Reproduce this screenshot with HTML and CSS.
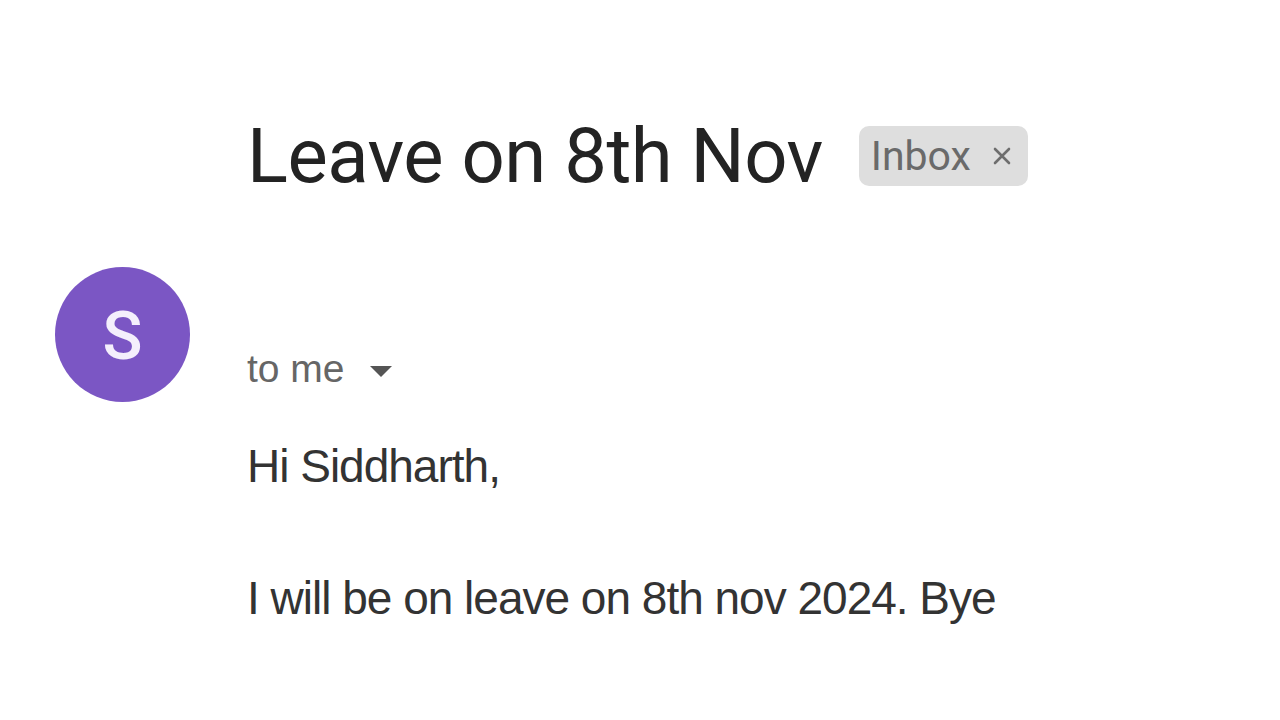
FILE: index.html
```html
<!DOCTYPE html>
<html lang="en">
<head>
<meta charset="utf-8">
<title>Leave on 8th Nov</title>
<link rel="stylesheet" href="styles.css">
</head>
<body>
<main class="mail">
  <header class="subject-row">
    <h1 class="subject">Leave on 8th Nov</h1>
    <span class="chip">
      <span class="chip-label">Inbox</span>
      <svg class="chip-x" viewBox="0 0 20 20" width="20" height="20" aria-hidden="true">
        <path d="M3 3 L17 17 M17 3 L3 17" stroke="#6e6e6e" stroke-width="2.6" stroke-linecap="round" fill="none"/>
      </svg>
    </span>
  </header>
  <section class="message">
    <div class="avatar"><span class="avatar-letter">S</span></div>
    <div class="content">
      <div class="meta">
        <span class="recipient">to me</span>
        <svg class="caret" viewBox="0 0 24 12" width="24" height="12" aria-hidden="true">
          <path d="M1 1 L23 1 L12 12 Z" fill="#555"/>
        </svg>
      </div>
      <p class="greeting">Hi Siddharth,</p>
      <p class="body-text">I will be on leave on 8th nov 2024. Bye</p>
    </div>
  </section>
</main>
</body>
</html>
```

FILE: styles.css
```css
html, body {
  margin: 0;
  padding: 0;
  background: #ffffff;
}

.mail {
  width: 1280px;
  height: 720px;
  overflow: hidden;
}

.subject-row {
  display: flex;
  align-items: center;
  gap: 36px;
  padding: 118px 0 0 247px;
}

.subject {
  margin: 0;
  font-family: Roboto, "Liberation Sans", sans-serif;
  font-weight: 400;
  font-size: 76px;
  line-height: 76px;
  color: #232323;
  letter-spacing: -0.5px;
}

.chip {
  display: flex;
  align-items: center;
  gap: 21px;
  height: 60px;
  padding: 0 16px 0 12px;
  background: #dedede;
  border-radius: 10px;
  box-sizing: border-box;
}

.chip-label {
  font-family: Roboto, "Liberation Sans", sans-serif;
  font-size: 41px;
  line-height: 60px;
  color: #6a6a6a;
}

.chip-x {
  display: block;
}

.message {
  display: flex;
  align-items: flex-start;
  gap: 57px;
  margin-top: 73px;
  padding-left: 55px;
}

.avatar {
  flex: none;
  width: 135px;
  height: 135px;
  border-radius: 50%;
  background: #7b56c4;
  color: #f4effc;
  display: flex;
  align-items: center;
  justify-content: center;
  font-family: Roboto, "Liberation Sans", sans-serif;
  font-weight: 500;
  font-size: 66px;
  line-height: 1;
}

.avatar-letter {
  display: block;
  margin-top: 4px;
}

.content {
  padding-top: 79px;
  font-family: "Liberation Sans", Arial, sans-serif;
}

.meta {
  display: flex;
  align-items: center;
  gap: 24px;
  height: 46px;
}

.recipient {
  font-size: 39px;
  line-height: 46px;
  color: #666666;
}

.caret {
  display: block;
  margin-top: 4px;
}

.greeting,
.body-text {
  margin: 0;
  font-size: 46px;
  line-height: 56px;
  letter-spacing: -1px;
  color: #333333;
}

.greeting {
  margin-top: 46px;
}

.body-text {
  margin-top: 76px;
}
```
